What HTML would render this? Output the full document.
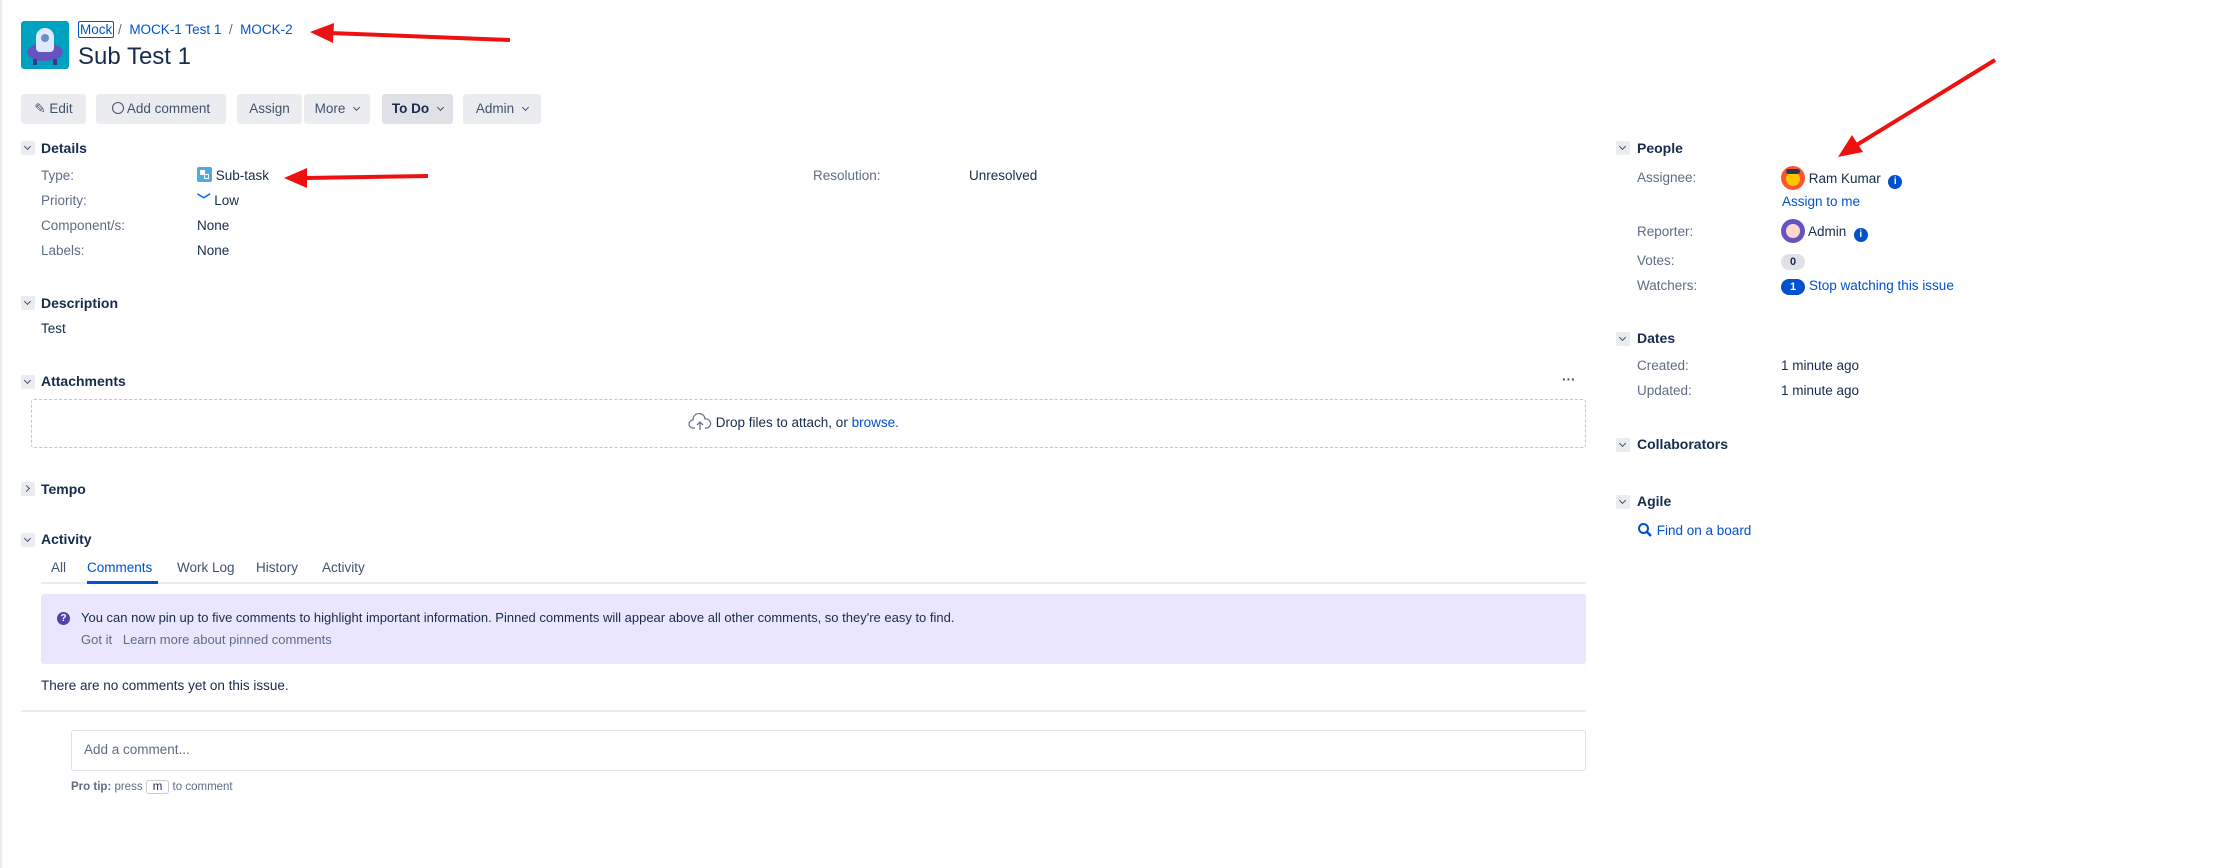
<!DOCTYPE html>
<html><head><meta charset="utf-8"><style>
*{box-sizing:border-box;margin:0;padding:0}
body{width:2230px;height:868px;position:relative;background:#fff;font-family:"Liberation Sans",sans-serif;font-size:13.5px;color:#172b4d;overflow:hidden;box-shadow:inset 2px 0 0 #ebecf0}
.a{position:absolute;white-space:nowrap;line-height:20px}
.l{color:#5e6c84}
.lk{color:#0052cc}
.btn{position:absolute;top:94px;height:30px;background:#ebecf0;border-radius:3px;line-height:30px;text-align:center;color:#42526e;font-size:13.5px}
.h{font-weight:bold;font-size:14px}
.chev{position:absolute;width:14px;height:14px;background:#ebecf0;border-radius:2px}
.chev:after{content:"";position:absolute;left:4px;top:3px;width:4px;height:4px;border-right:1.6px solid #42526e;border-bottom:1.6px solid #42526e;transform:rotate(45deg)}
.chev.r:after{transform:rotate(-45deg);left:3px;top:4px}
.dd:after{content:"";display:inline-block;width:4px;height:4px;border-right:1.6px solid #42526e;border-bottom:1.6px solid #42526e;transform:rotate(45deg);margin-left:9px;vertical-align:3px}
</style></head><body>

<div class="a" style="left:21px;top:21px;width:48px;height:48px;background:#00a3bf;border-radius:3px;overflow:hidden">
<div style="position:absolute;left:6px;top:22px;width:36px;height:18px;background:#6554c0;border-radius:50%"></div>
<div style="position:absolute;left:15px;top:7px;width:18px;height:24px;background:#deebff;border-radius:9px 9px 4px 4px"></div>
<div style="position:absolute;left:20px;top:13px;width:8px;height:8px;background:#6a8fc4;border-radius:50%"></div>
<div style="position:absolute;left:12px;top:38px;width:4px;height:6px;background:#403294"></div>
<div style="position:absolute;left:32px;top:38px;width:4px;height:6px;background:#403294"></div>
</div>
<div class="a" style="left:78px;top:20px"><span class="lk" style="border:1px solid #0052cc;border-radius:2px;padding:0 1px">Mock</span> <span class="l">/</span> &nbsp;<span class="lk">MOCK-1 Test 1</span> &nbsp;<span class="l">/</span> &nbsp;<span class="lk">MOCK-2</span></div>
<div class="a" style="left:78px;top:40px;font-size:24px;line-height:34px;font-weight:500">Sub Test 1</div>

<div class="btn" style="left:21px;width:65px">✎ Edit</div>
<div class="btn" style="left:96px;width:130px"><span style="display:inline-block;width:12px;height:12px;border:1.5px solid #42526e;border-radius:50%;vertical-align:-1px"></span> Add comment</div>
<div class="btn" style="left:237px;width:65px">Assign</div>
<div class="btn dd" style="left:304px;width:66px">More</div>
<div class="btn dd" style="left:382px;width:71px;background:#dfe1e6;color:#172b4d;font-weight:bold">To Do</div>
<div class="btn dd" style="left:463px;width:78px">Admin</div>

<div class="chev" style="left:21px;top:141px"></div><div class="a h" style="left:41px;top:138px">Details</div>
<div class="a l" style="left:41px;top:166px">Type:</div>
<div class="a" style="left:197px;top:166px"><span style="display:inline-block;width:15px;height:15px;background:#4bade8;border-radius:2px;vertical-align:-2px;position:relative"><span style="position:absolute;left:3px;top:3px;width:5px;height:5px;background:#fff"></span><span style="position:absolute;left:7px;top:7px;width:5px;height:5px;border:1.5px solid #fff"></span></span> Sub-task</div>
<div class="a l" style="left:41px;top:191px">Priority:</div>
<div class="a" style="left:197px;top:191px"><span style="color:#0065ff;font-weight:bold">﹀</span> Low</div>
<div class="a l" style="left:41px;top:216px">Component/s:</div><div class="a" style="left:197px;top:216px">None</div>
<div class="a l" style="left:41px;top:241px">Labels:</div><div class="a" style="left:197px;top:241px">None</div>
<div class="a l" style="left:813px;top:166px">Resolution:</div><div class="a" style="left:969px;top:166px">Unresolved</div>

<div class="chev" style="left:21px;top:296px"></div><div class="a h" style="left:41px;top:293px">Description</div>
<div class="a" style="left:41px;top:319px">Test</div>

<div class="chev" style="left:21px;top:375px"></div><div class="a h" style="left:41px;top:371px">Attachments</div>
<div class="a" style="left:1562px;top:370px;font-weight:bold;color:#42526e">···</div>
<div class="a" style="left:31px;top:399px;width:1555px;height:49px;border:1px dashed #c1c7d0;border-radius:3px"></div>
<div class="a" style="left:688px;top:413px"><svg width="24" height="18" viewBox="0 0 24 18" style="vertical-align:-4px"><path d="M7 15H5a4 4 0 0 1 0-8 6 6 0 0 1 12-1 4 4 0 0 1 2 9h-2M12 17V9M9 12l3-3 3 3" fill="none" stroke="#6b778c" stroke-width="1.3"/></svg> Drop files to attach, or <span class="lk">browse.</span></div>

<div class="chev r" style="left:21px;top:482px"></div><div class="a h" style="left:41px;top:479px">Tempo</div>

<div class="chev" style="left:21px;top:533px"></div><div class="a h" style="left:41px;top:529px">Activity</div>
<div class="a" style="left:51px;top:558px;color:#42526e">All</div>
<div class="a lk" style="left:87px;top:558px">Comments</div>
<div class="a" style="left:177px;top:558px;color:#42526e">Work Log</div>
<div class="a" style="left:256px;top:558px;color:#42526e">History</div>
<div class="a" style="left:322px;top:558px;color:#42526e">Activity</div>
<div class="a" style="left:41px;top:582px;width:1545px;height:2px;background:#ebecf0"></div>
<div class="a" style="left:87px;top:581px;width:71px;height:3px;background:#0052cc"></div>
<div class="a" style="left:41px;top:594px;width:1545px;height:70px;background:#eae6ff;border-radius:3px"></div>
<div class="a" style="left:57px;top:612px;width:13px;height:13px;border-radius:50%;background:#5243aa;color:#fff;font-size:10px;line-height:13px;text-align:center;font-weight:bold">?</div>
<div class="a" style="left:81px;top:608px;font-size:13px">You can now pin up to five comments to highlight important information. Pinned comments will appear above all other comments, so they're easy to find.</div>
<div class="a l" style="left:81px;top:630px;font-size:13px">Got it &nbsp;&nbsp;Learn more about pinned comments</div>
<div class="a" style="left:41px;top:676px">There are no comments yet on this issue.</div>
<div class="a" style="left:21px;top:710px;width:1565px;height:2px;background:#ebecf0"></div>
<div class="a" style="left:71px;top:730px;width:1515px;height:41px;border:1px solid #dfe1e6;border-radius:3px"></div>
<div class="a l" style="left:84px;top:740px">Add a comment...</div>
<div class="a l" style="left:71px;top:777px;font-size:11.5px"><b>Pro tip:</b> press <span style="border:1px solid #ccc;border-radius:3px;padding:0 6px;color:#172b4d;background:#fff">m</span> to comment</div>

<div class="chev" style="left:1616px;top:141px"></div><div class="a h" style="left:1637px;top:138px">People</div>
<div class="a l" style="left:1637px;top:168px">Assignee:</div>
<div class="a" style="left:1781px;top:166px"><span style="display:inline-block;width:24px;height:24px;border-radius:50%;background:#ff5630;vertical-align:-7px;position:relative"><span style="position:absolute;left:5px;top:6px;width:14px;height:14px;border-radius:50%;background:#ffc400"></span><span style="position:absolute;left:5px;top:3px;width:14px;height:5px;background:#253858;border-radius:3px"></span></span> Ram Kumar &nbsp;<span style="display:inline-block;width:14px;height:14px;border-radius:50%;background:#0052cc;color:#fff;font-size:10px;line-height:14px;text-align:center;font-weight:bold;vertical-align:-1px">i</span></div>
<div class="a lk" style="left:1782px;top:192px">Assign to me</div>
<div class="a l" style="left:1637px;top:222px">Reporter:</div>
<div class="a" style="left:1781px;top:219px"><span style="display:inline-block;width:24px;height:24px;border-radius:50%;background:#6554c0;vertical-align:-7px;position:relative"><span style="position:absolute;left:5px;top:5px;width:14px;height:14px;border-radius:50%;background:#ffd8cc"></span></span> Admin &nbsp;<span style="display:inline-block;width:14px;height:14px;border-radius:50%;background:#0052cc;color:#fff;font-size:10px;line-height:14px;text-align:center;font-weight:bold;vertical-align:-1px">i</span></div>
<div class="a l" style="left:1637px;top:251px">Votes:</div>
<div class="a" style="left:1781px;top:254px;width:24px;height:16px;border-radius:8px;background:#dfe1e6;font-size:11px;font-weight:bold;line-height:16px;text-align:center">0</div>
<div class="a l" style="left:1637px;top:276px">Watchers:</div>
<div class="a" style="left:1781px;top:279px;width:24px;height:16px;border-radius:8px;background:#0052cc;color:#fff;font-size:11px;font-weight:bold;line-height:16px;text-align:center">1</div>
<div class="a lk" style="left:1809px;top:276px">Stop watching this issue</div>

<div class="chev" style="left:1616px;top:332px"></div><div class="a h" style="left:1637px;top:328px">Dates</div>
<div class="a l" style="left:1637px;top:356px">Created:</div><div class="a" style="left:1781px;top:356px">1 minute ago</div>
<div class="a l" style="left:1637px;top:381px">Updated:</div><div class="a" style="left:1781px;top:381px">1 minute ago</div>

<div class="chev" style="left:1616px;top:438px"></div><div class="a h" style="left:1637px;top:434px">Collaborators</div>
<div class="chev" style="left:1616px;top:495px"></div><div class="a h" style="left:1637px;top:491px">Agile</div>
<div class="a lk" style="left:1637px;top:521px"><svg width="16" height="16" viewBox="0 0 16 16" style="vertical-align:-3px"><circle cx="6.5" cy="6.5" r="4.5" fill="none" stroke="#0052cc" stroke-width="2"/><path d="M10 10l4 4" stroke="#0052cc" stroke-width="2.4"/></svg> Find on a board</div>

<svg class="a" style="left:0;top:0" width="2230" height="868">
<g stroke="#ee1111" stroke-width="4" fill="#ee1111">
<line x1="510" y1="40" x2="330" y2="33"/><polygon points="310,32 334,23 333,43" stroke="none"/>
<line x1="428" y1="176" x2="305" y2="178"/><polygon points="284,178 307,168 307,188" stroke="none"/>
<line x1="1995" y1="60" x2="1855" y2="146"/><polygon points="1838,157 1852,135 1863,152" stroke="none"/>
</g></svg>
</body></html>
